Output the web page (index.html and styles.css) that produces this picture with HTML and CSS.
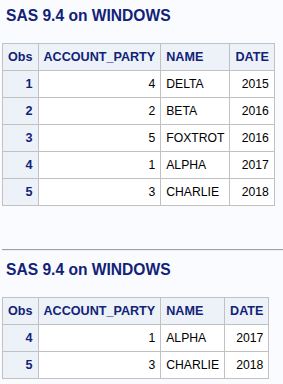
FILE: index.html
```html
<!DOCTYPE html>
<html lang="en">
  <head>
    <meta charset="UTF-8" />
    <title>SAS Output</title>
    <link rel="stylesheet" href="styles.css">
  </head>

  <body>
    <div class="output">
      <h1 class="systemtitle">SAS 9.4 on WINDOWS</h1>
      <table class="table">
        <thead>
          <tr>
            <th class="header">Obs</th>
            <th class="header">ACCOUNT_PARTY</th>
            <th class="header">NAME</th>
            <th class="header r">DATE</th>
          </tr>
        </thead>
        <tbody>
          <tr><th class="rowheader">1</th><td class="r">4</td><td>DELTA</td><td class="r">2015</td></tr>
          <tr><th class="rowheader">2</th><td class="r">2</td><td>BETA</td><td class="r">2016</td></tr>
          <tr><th class="rowheader">3</th><td class="r">5</td><td>FOXTROT</td><td class="r">2016</td></tr>
          <tr><th class="rowheader">4</th><td class="r">1</td><td>ALPHA</td><td class="r">2017</td></tr>
          <tr><th class="rowheader">5</th><td class="r">3</td><td>CHARLIE</td><td class="r">2018</td></tr>
        </tbody>
      </table>
    </div>

    <hr class="pagebreak" />

    <div class="output">
      <h1 class="systemtitle">SAS 9.4 on WINDOWS</h1>
      <table class="table">
        <thead>
          <tr>
            <th class="header">Obs</th>
            <th class="header">ACCOUNT_PARTY</th>
            <th class="header">NAME</th>
            <th class="header r">DATE</th>
          </tr>
        </thead>
        <tbody>
          <tr><th class="rowheader">4</th><td class="r">1</td><td>ALPHA</td><td class="r">2017</td></tr>
          <tr><th class="rowheader">5</th><td class="r">3</td><td>CHARLIE</td><td class="r">2018</td></tr>
        </tbody>
      </table>
    </div>
  </body>
</html>
```

FILE: styles.css
```css
html,
body {
  margin: 0;
  padding: 0;
}

body {
  font-family: "Liberation Sans", Arial, sans-serif;
  background-color: #fafbfe;
  color: #000;
}

.output {
  padding: 7px 0 0 2px;
}

.systemtitle {
  margin: 0 0 18px 4px;
  font-size: 15.6px;
  line-height: 18px;
  font-weight: 700;
  color: #112277;
}

.table {
  border-collapse: collapse;
  border: 1px solid #c1c1c1;
  font-size: 12.2px;
  line-height: 16px;
}

.table th,
.table td {
  padding: 5px 5px;
  border: 1px solid #c1c1c1;
  text-align: left;
  white-space: nowrap;
}

.header,
.rowheader {
  font-size: 12.6px;
  font-weight: 700;
  color: #112277;
  background-color: #edf2f9;
}

.rowheader {
  text-align: right !important;
}

.table td {
  background-color: #fff;
}

.r {
  text-align: right !important;
}

.pagebreak {
  height: 0;
  margin: 43px 0 3px 2px;
  border: 0;
  border-top: 1px solid #a0a0a0;
  border-bottom: 1px solid #eeeeee;
}
```
